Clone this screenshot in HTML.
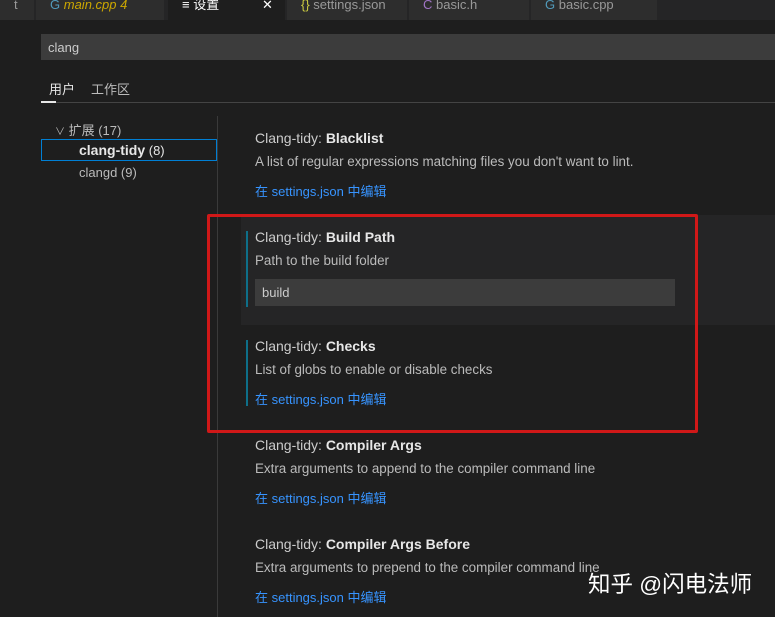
<!DOCTYPE html>
<html><head><meta charset="utf-8"><style>
*{margin:0;padding:0;box-sizing:border-box}
body{width:775px;height:617px;background:#1e1e1e;overflow:hidden;position:relative;font-family:"Liberation Sans","Noto Sans CJK SC",sans-serif;font-size:13px;color:#ccc}
.a{position:absolute;white-space:nowrap}
.tab{position:absolute;top:0;height:20px;background:#2d2d2d;color:#999;font-size:13px;line-height:10px;padding-left:14px}
.t{font-size:14px;color:#ccc;left:255px}
.t b{color:#e7e7e7}
.d{font-size:13.4px;color:#bbb;left:255px}
.l{font-size:13px;color:#3794ff;left:255px}
</style></head><body>
<div class="a" style="left:0;top:0;width:775px;height:20px;background:#252526"></div>
<div class="tab" style="left:0;width:34px">t</div>
<div class="tab" style="left:36px;width:128px"><span style="color:#519aba">G</span> <i style="color:#cca700">main.cpp 4</i></div>
<div class="tab" style="left:168px;width:117px;background:#1e1e1e;color:#fff">≡ 设置 <span style="position:absolute;left:94px">✕</span></div>
<div class="tab" style="left:287px;width:120px"><span style="color:#cbcb41">{}</span> settings.json</div>
<div class="tab" style="left:409px;width:120px"><span style="color:#a074c4">C</span>  basic.h</div>
<div class="tab" style="left:531px;width:126px"><span style="color:#519aba">G</span> basic.cpp</div>
<div class="a" style="left:41px;top:34px;width:734px;height:26px;background:#3c3c3c;color:#ccc;padding:6px 7px;font-size:13px">clang</div>
<div class="a" style="left:49px;top:79px;color:#e7e7e7">用户</div>
<div class="a" style="left:91px;top:79px;color:#bbb">工作区</div>
<div class="a" style="left:41px;top:102px;width:734px;height:1px;background:#444"></div>
<div class="a" style="left:41px;top:101px;width:15px;height:2px;background:#e7e7e7"></div>

<div class="a" style="left:217px;top:116px;width:1px;height:501px;background:#3a3a3a"></div>
<div class="a" style="left:55px;top:120px;color:#bbb"><span style="font-size:10px">∨</span> 扩展 (17)</div>
<div class="a" style="left:41px;top:139px;width:176px;height:22px;border:1px solid #007fd4"></div>
<div class="a" style="left:79px;top:142px;color:#e7e7e7"><b style="font-size:14px">clang-tidy</b> (8)</div>
<div class="a" style="left:79px;top:165px;color:#bbb">clangd (9)</div>

<div class="a t" style="top:130px">Clang-tidy: <b>Blacklist</b></div>
<div class="a d" style="top:154px">A list of regular expressions matching files you don't want to lint.</div>
<div class="a l" style="top:181px">在 settings.json 中编辑</div>

<div class="a" style="left:241px;top:215px;width:534px;height:110px;background:#252526"></div>
<div class="a" style="left:246px;top:231px;width:2px;height:76px;background:#0e6f89"></div>
<div class="a t" style="top:229px">Clang-tidy: <b>Build Path</b></div>
<div class="a d" style="top:253px">Path to the build folder</div>
<div class="a" style="left:255px;top:279px;width:420px;height:27px;background:#3c3c3c;color:#ccc;padding:6px 7px">build</div>

<div class="a" style="left:246px;top:340px;width:2px;height:66px;background:#0e6f89"></div>
<div class="a t" style="top:338px">Clang-tidy: <b>Checks</b></div>
<div class="a d" style="top:362px">List of globs to enable or disable checks</div>
<div class="a l" style="top:389px">在 settings.json 中编辑</div>

<div class="a" style="left:207px;top:214px;width:491px;height:219px;border:3px solid #d01818;border-radius:2px"></div>

<div class="a t" style="top:437px">Clang-tidy: <b>Compiler Args</b></div>
<div class="a d" style="top:461px">Extra arguments to append to the compiler command line</div>
<div class="a l" style="top:488px">在 settings.json 中编辑</div>

<div class="a t" style="top:536px">Clang-tidy: <b>Compiler Args Before</b></div>
<div class="a d" style="top:560px">Extra arguments to prepend to the compiler command line</div>
<div class="a l" style="top:587px">在 settings.json 中编辑</div>

<div class="a" style="left:588px;top:567px;font-size:22.5px;color:#fff">知乎 @闪电法师</div>
</body></html>
